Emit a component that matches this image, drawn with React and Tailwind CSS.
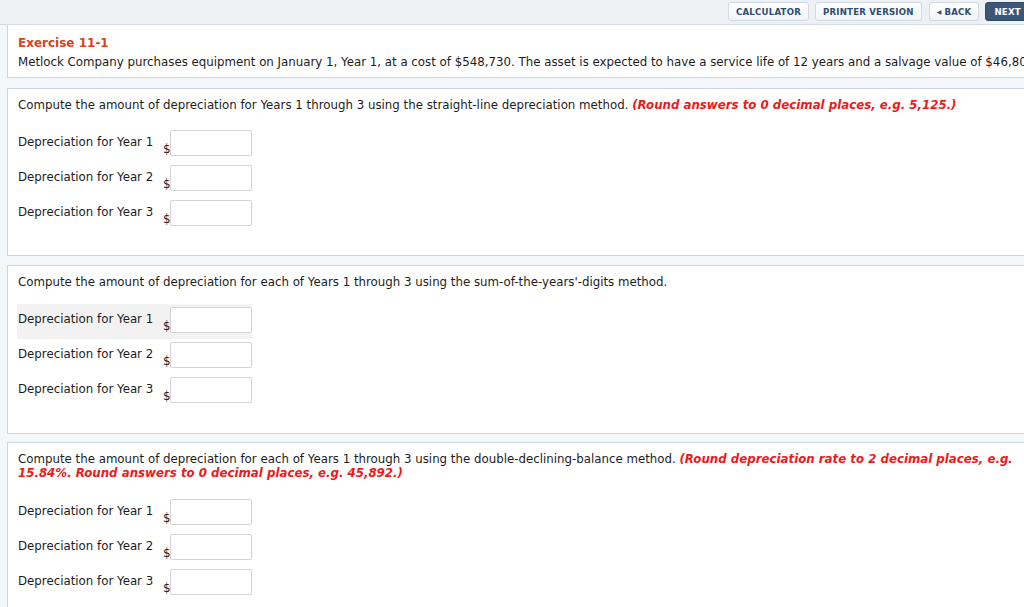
import React from 'react';

const font = "font-['Verdana','DejaVu_Sans',sans-serif]";

const TopButton = ({ children, dark }) => (
  <div
    className={
      dark
        ? 'h-[19px] px-[8px] flex items-center rounded-[3px] bg-[#3b5677] border border-[#2f4864] text-white text-[8.6px] font-bold tracking-[0.2px] shrink-0'
        : 'h-[19px] px-[7px] flex items-center rounded-[3px] bg-gradient-to-b from-white to-[#f1f4f7] border border-[#d3dae2] text-[#2f4d70] text-[8.6px] font-bold tracking-[0.2px] shrink-0'
    }
  >
    {children}
  </div>
);

const Row = ({ year, highlight }) => (
  <div
    className={`flex items-start h-[35px] w-[235px] -ml-[1px] pl-[1px] ${
      highlight ? 'bg-[#f2f2f2]' : ''
    }`}
  >
    <div className="w-[145px] pt-[8px] text-[#1c1c1c] whitespace-nowrap">Depreciation for Year {year}</div>
    <div className="flex items-end pt-[3px]">
      <span className="w-[7px] leading-[14px] text-[#1c1c1c]">$</span>
      <div className="w-[82px] h-[26px] bg-white border border-[#d4d4d4] rounded-[2px]" />
    </div>
  </div>
);

const Panel = ({ children, className = '' }) => (
  <div className={`w-[1100px] bg-white border border-[#cdd5de] pl-[10px] ${className}`}>
    {children}
  </div>
);

const App = () => {
  return (
    <div className={`w-[1024px] h-[607px] overflow-hidden bg-[#f4f7fa] ${font} text-[11.8px] leading-[14px] text-[#1c1c1c]`}>
      {/* Top bar */}
      <div className="h-[25px] bg-[#eef1f4] border-b border-[#d5dbe2] flex items-start pt-[2px] pl-[728px] whitespace-nowrap">
        <TopButton>CALCULATOR</TopButton>
        <div className="w-[6px] shrink-0" />
        <TopButton>PRINTER VERSION</TopButton>
        <div className="w-[7px] shrink-0" />
        <TopButton>
          <span className="text-[6px] mr-[3px]">◀</span>BACK
        </TopButton>
        <div className="w-[6px] shrink-0" />
        <TopButton dark>NEXT</TopButton>
      </div>

      <div className="pl-[7px]">
        {/* Intro */}
        <Panel className="border-t-0 pt-[11px] pb-[8px] whitespace-nowrap">
          <div className="text-[#d6431d] font-bold text-[12px] leading-[14px] mb-[5px]">Exercise 11-1</div>
          <div>
            Metlock Company purchases equipment on January 1, Year 1, at a cost of $548,730. The asset is expected to
            have a service life of 12 years and a salvage value of $46,800.
          </div>
        </Panel>

        {/* Straight-line */}
        <Panel className="mt-[10px] pt-[9px] pb-[23px]">
          <div className="whitespace-nowrap">
            Compute the amount of depreciation for Years 1 through 3 using the straight-line depreciation method.{' '}
            <span className="text-[#f01818] font-bold italic">(Round answers to 0 decimal places, e.g. 5,125.)</span>
          </div>
          <div className="mt-[15px]">
            <Row year={1} />
            <Row year={2} />
            <Row year={3} />
          </div>
        </Panel>

        {/* Sum-of-the-years'-digits */}
        <Panel className="mt-[9px] pt-[9px] pb-[24px]">
          <div className="whitespace-nowrap">
            Compute the amount of depreciation for each of Years 1 through 3 using the sum-of-the-years'-digits method.
          </div>
          <div className="mt-[15px]">
            <Row year={1} highlight />
            <Row year={2} />
            <Row year={3} />
          </div>
        </Panel>

        {/* Double-declining-balance */}
        <Panel className="mt-[8px] pt-[9px] pb-[23px]">
          <div className="w-[1000px]">
            Compute the amount of depreciation for each of Years 1 through 3 using the double-declining-balance method.{' '}
            <span className="text-[#f01818] font-bold italic">
              (Round depreciation rate to 2 decimal places, e.g. 15.84%. Round answers to 0 decimal places, e.g.
              45,892.)
            </span>
          </div>
          <div className="mt-[16px]">
            <Row year={1} />
            <Row year={2} />
            <Row year={3} />
          </div>
        </Panel>
      </div>
    </div>
  );
};

export default App;
